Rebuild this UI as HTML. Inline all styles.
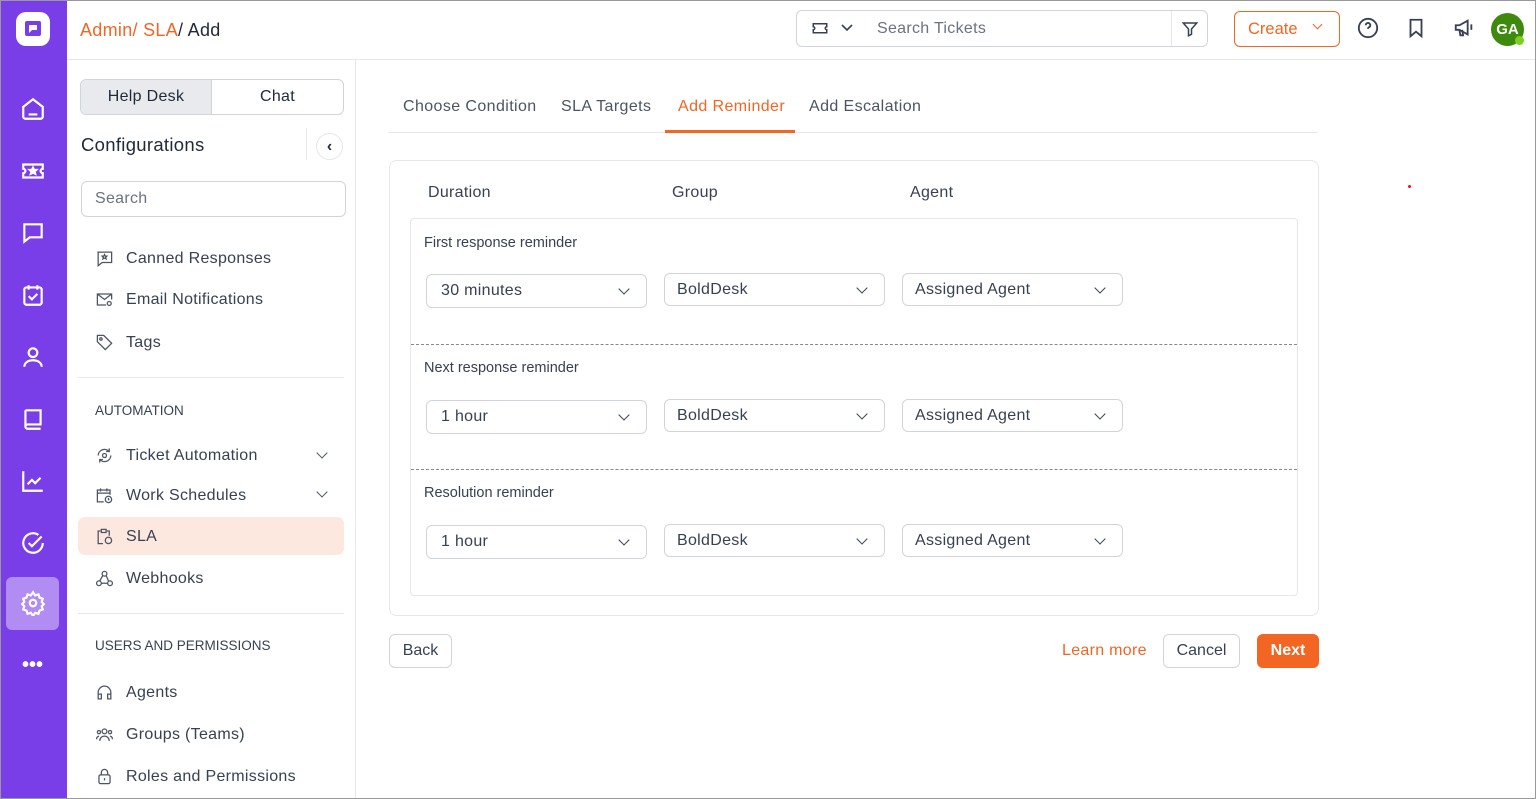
<!DOCTYPE html>
<html><head><style>
*{box-sizing:border-box;margin:0;padding:0}
body{width:1536px;height:799px;overflow:hidden;font-family:"Liberation Sans",sans-serif;color:#1f2937;background:#fff;position:relative}
.frame{position:absolute;left:0;top:0;width:1536px;height:799px;border:1px solid #999;pointer-events:none;z-index:9}
.abs{position:absolute}
.nav{left:0;top:0;width:67px;height:799px;background:#7a3ee8}
.nav svg{position:absolute;left:20px}
.hdr{left:67px;top:0;right:0;height:60px;border-bottom:1px solid #e5e7eb}
.side{left:67px;top:60px;width:289px;bottom:0;border-right:1px solid #e5e7eb}
.item{position:absolute;left:28px;font-size:16px;letter-spacing:.3px;color:#374151;display:flex;align-items:center;gap:12px}
.item svg{width:19px;height:19px}
.sec{position:absolute;left:28px;font-size:13.5px;color:#374151}
.dd{position:absolute;height:34px;width:221px;border:1px solid #d1d5db;border-radius:6px;font-size:16px;letter-spacing:.3px;color:#374151;padding:0 14px;display:flex;align-items:center;justify-content:space-between}
.dd:after{content:"";width:7px;height:7px;border-right:1.6px solid #374151;border-bottom:1.6px solid #374151;transform:rotate(45deg);margin:-4px 4px 0 0}
.lbl{position:absolute;left:424px;font-size:14.5px;color:#374151}
.btn{position:absolute;top:634px;height:34px;border:1px solid #d1d5db;border-radius:6px;font-size:16px;display:flex;align-items:center;justify-content:center;color:#374151}
.tab{position:absolute;top:98px;font-size:16px;letter-spacing:.4px;color:#4b5563}
.chev{position:absolute;width:8px;height:8px;border-right:1.6px solid #4b5563;border-bottom:1.6px solid #4b5563;transform:rotate(45deg)}
</style></head><body>
<div class="frame"></div>
<div class="abs nav">
<svg style="top:12px;left:16px" width="34" height="34" viewBox="0 0 34 34"><rect x="0" y="0" width="34" height="34" rx="10" fill="#fff"/><rect x="9" y="9" width="16" height="15" rx="2" fill="#7a3ee8"/><path d="M13 13h8v5h-5l-3 3z" fill="#fff"/></svg>
<svg style="top:96px" width="26" height="26" viewBox="0 0 24 24" fill="none" stroke="#fff" stroke-width="2"><path d="M3 10l9-7 9 7v9a2 2 0 0 1-2 2H5a2 2 0 0 1-2-2z M8 17h8"/></svg>
<svg style="top:158px" width="26" height="26" viewBox="0 0 24 24" fill="none" stroke="#fff" stroke-width="2"><path d="M3 6h18v4a2 2 0 0 0 0 4v4H3v-4a2 2 0 0 0 0-4z"/><path d="M12 9l1 2h2l-1.5 1.5.5 2-2-1-2 1 .5-2L9 11h2z" fill="#fff"/></svg>
<svg style="top:220px" width="26" height="26" viewBox="0 0 24 24" fill="none" stroke="#fff" stroke-width="2"><path d="M4 4h16v12H9l-5 4z"/></svg>
<svg style="top:282px" width="26" height="26" viewBox="0 0 24 24" fill="none" stroke="#fff" stroke-width="2"><rect x="4" y="5" width="16" height="16" rx="2"/><path d="M8 3v4M16 3v4M8 13l3 3 5-5"/></svg>
<svg style="top:344px" width="26" height="26" viewBox="0 0 24 24" fill="none" stroke="#fff" stroke-width="2"><circle cx="12" cy="8" r="4"/><path d="M4 21c0-4 4-6 8-6s8 2 8 6"/></svg>
<svg style="top:406px" width="26" height="26" viewBox="0 0 24 24" fill="none" stroke="#fff" stroke-width="2"><path d="M5 4h14v13H7a2 2 0 0 0 0 4h12M5 4v15"/></svg>
<svg style="top:468px" width="26" height="26" viewBox="0 0 24 24" fill="none" stroke="#fff" stroke-width="2"><path d="M3 3v18h18M7 15l4-4 3 3 5-5"/></svg>
<svg style="top:530px" width="26" height="26" viewBox="0 0 24 24" fill="none" stroke="#fff" stroke-width="2"><path d="M21 12a9 9 0 1 1-4-7.5"/><path d="M8 12l3 3 9-9"/></svg>
<div class="abs" style="left:6px;top:577px;width:53px;height:53px;border-radius:6px;background:#b18cf3"></div>
<svg style="top:590px" width="26" height="26" viewBox="0 0 24 24" fill="none" stroke="#fff" stroke-width="2"><circle cx="12" cy="12" r="3"/><path d="M12 2l2 3 3-1 1 3 3 1-1 3 2 2-2 2 1 3-3 1-1 3-3-1-2 3-2-3-3 1-1-3-3-1 1-3-2-2 2-2-1-3 3-1 1-3 3 1z"/></svg>
<div class="abs" style="left:22px;top:654px;color:#fff;font-size:20px;font-weight:bold;letter-spacing:0px">•••</div>
</div>
<div class="abs hdr">
<div class="abs" style="left:13px;top:20px;font-size:18px;letter-spacing:.3px"><span style="color:#f26522">Admin/ SLA</span>/ Add</div>
<div class="abs" style="left:729px;top:10px;width:412px;height:37px;border:1px solid #d1d5db;border-radius:6px">
<svg class="abs" style="left:14px;top:10px" width="18" height="16" viewBox="0 0 24 20" fill="none" stroke="#374151" stroke-width="2"><path d="M3 3h18v4a2 2 0 0 0 0 4v4H3v-4a2 2 0 0 0 0-4z"/></svg>
<svg class="abs" style="left:44px;top:12px" width="12" height="10" viewBox="0 0 12 8" fill="none" stroke="#374151" stroke-width="1.6"><path d="M1 1l5 5 5-5"/></svg>
<div class="abs" style="left:80px;top:9px;font-size:16px;letter-spacing:.3px;color:#6b7280">Search Tickets</div>
<div class="abs" style="left:374px;top:0;width:1px;height:35px;background:#e5e7eb"></div>
<svg class="abs" style="left:384px;top:9px" width="18" height="18" viewBox="0 0 24 24" fill="none" stroke="#374151" stroke-width="2"><path d="M3 4h18l-7 8v7l-4 2v-9z"/></svg>
</div>
<div class="abs" style="left:1167px;top:11px;width:106px;height:36px;border:1px solid #f26522;border-radius:6px;color:#f26522;font-size:16.5px;padding:8px 0 0 13px">Create</div>
<div class="abs" style="left:1247px;top:21px;width:7px;height:7px;border-right:1.6px solid #f26522;border-bottom:1.6px solid #f26522;transform:rotate(45deg)"></div>
<svg class="abs" style="left:1290px;top:17px" width="22" height="22" viewBox="0 0 24 24" fill="none" stroke="#374151" stroke-width="2"><circle cx="12" cy="12" r="10"/><path d="M9.5 9a2.5 2.5 0 1 1 3.5 2.3c-.6.3-1 .9-1 1.7M12 17h.01"/></svg>
<svg class="abs" style="left:1338px;top:17px" width="22" height="22" viewBox="0 0 24 24" fill="none" stroke="#374151" stroke-width="2"><path d="M6 3h12v18l-6-5-6 5z"/></svg>
<svg class="abs" style="left:1385px;top:17px" width="24" height="22" viewBox="0 0 24 24" fill="none" stroke="#374151" stroke-width="2"><path d="M3 9h4l9-5v15l-9-5H3zM7 14l1 6h3l-1-6M20 8v6"/></svg>
<div class="abs" style="left:1424px;top:13px;width:33px;height:33px;border-radius:50%;background:#3e8a0c;color:#fff;font-size:15px;font-weight:bold;text-align:center;line-height:33px">GA</div>
<div class="abs" style="left:1448px;top:36px;width:9px;height:9px;border-radius:50%;background:#7bd11a"></div>
</div>
<div class="abs side">
<div class="abs" style="left:13px;top:19px;width:264px;height:36px;border:1px solid #d1d5db;border-radius:6px;display:flex;overflow:hidden;font-size:16px;letter-spacing:.3px">
<div style="width:131px;background:#e9eaee;text-align:center;line-height:34px;border-right:1px solid #d1d5db">Help Desk</div><div style="flex:1;text-align:center;line-height:34px">Chat</div></div>
<div class="abs" style="left:14px;top:74px;font-size:18.5px;letter-spacing:.3px">Configurations</div>
<div class="abs" style="left:239px;top:68px;width:1px;height:32px;background:#e5e7eb"></div>
<div class="abs" style="left:249px;top:73px;width:27px;height:27px;border:1px solid #e5e7eb;border-radius:50%;text-align:center;line-height:25px;font-weight:bold;font-size:16px">‹</div>
<div class="abs" style="left:14px;top:121px;width:265px;height:36px;border:1px solid #d1d5db;border-radius:6px;font-size:16px;letter-spacing:.3px;color:#6b7280;padding:8px 13px">Search</div>
<div class="item" style="top:189px"><svg viewBox="0 0 24 24" fill="none" stroke="#4b5563" stroke-width="1.6"><path d="M3 4h18v13H9l-5 4V4"/><path d="M12 7l1 2h2l-1.5 1.5.5 2-2-1-2 1 .5-2L9 9h2z"/></svg>Canned Responses</div>
<div class="item" style="top:230px"><svg viewBox="0 0 24 24" fill="none" stroke="#4b5563" stroke-width="1.6"><path d="M14 19H3V5h18v7M3 5l9 7 9-7"/><circle cx="18" cy="17" r="2.5"/></svg>Email Notifications</div>
<div class="item" style="top:273px"><svg viewBox="0 0 24 24" fill="none" stroke="#4b5563" stroke-width="1.6"><path d="M3 3h8l10 10-8 8L3 11z"/><circle cx="7.5" cy="7.5" r="1.5"/></svg>Tags</div>
<div class="abs" style="left:11px;top:317px;width:266px;height:1px;background:#e5e7eb"></div>
<div class="sec" style="top:343px">AUTOMATION</div>
<div class="item" style="top:386px"><svg viewBox="0 0 24 24" fill="none" stroke="#4b5563" stroke-width="1.6"><path d="M4 12a8 8 0 0 1 14-5M20 12a8 8 0 0 1-14 5M18 3v4h-4M6 21v-4h4"/><circle cx="12" cy="12" r="2.5"/></svg>Ticket Automation</div>
<div class="item" style="top:426px"><svg viewBox="0 0 24 24" fill="none" stroke="#4b5563" stroke-width="1.6"><path d="M11 20H3V5h16v6M3 9h16M7 3v4M15 3v4"/><circle cx="17" cy="17" r="4"/><path d="M17 15v2l1 1"/></svg>Work Schedules</div>
<div class="chev" style="left:251px;top:389px"></div>
<div class="chev" style="left:251px;top:428px"></div>
<div class="abs" style="left:11px;top:457px;width:266px;height:38px;border-radius:7px;background:#fde8df"></div>
<div class="item" style="top:467px"><svg viewBox="0 0 24 24" fill="none" stroke="#4b5563" stroke-width="1.6"><path d="M10 21H4V5h3M15 5h3v6M8 3h6v4H8z"/><circle cx="17" cy="17" r="4"/></svg>SLA</div>
<div class="item" style="top:509px"><svg viewBox="0 0 24 24" fill="none" stroke="#4b5563" stroke-width="1.6"><circle cx="12" cy="6" r="3"/><circle cx="5" cy="18" r="3"/><circle cx="19" cy="18" r="3"/><path d="M10 8l-4 7M8 18h8M14 8l3 7"/></svg>Webhooks</div>
<div class="abs" style="left:11px;top:553px;width:266px;height:1px;background:#e5e7eb"></div>
<div class="sec" style="top:578px">USERS AND PERMISSIONS</div>
<div class="item" style="top:623px"><svg viewBox="0 0 24 24" fill="none" stroke="#4b5563" stroke-width="1.6"><path d="M4 18v-6a8 8 0 0 1 16 0v6M4 14h4v6H4zM16 14h4v6h-4z"/></svg>Agents</div>
<div class="item" style="top:665px"><svg viewBox="0 0 24 24" fill="none" stroke="#4b5563" stroke-width="1.6"><circle cx="12" cy="8" r="3"/><circle cx="5" cy="9" r="2"/><circle cx="19" cy="9" r="2"/><path d="M6 20a6 6 0 0 1 12 0M2 18a4 4 0 0 1 3-4M22 18a4 4 0 0 0-3-4"/></svg>Groups (Teams)</div>
<div class="item" style="top:707px"><svg viewBox="0 0 24 24" fill="none" stroke="#4b5563" stroke-width="1.6"><rect x="5" y="10" width="14" height="11" rx="2"/><path d="M8 10V7a4 4 0 0 1 8 0v3M12 14v3"/></svg>Roles and Permissions</div>
</div>
<div class="abs" style="left:388px;top:132px;width:930px;height:1px;background:#e5e7eb"></div>
<div class="tab" style="left:403px">Choose Condition</div>
<div class="tab" style="left:561px">SLA Targets</div>
<div class="tab" style="left:678px;color:#f26522">Add Reminder</div>
<div class="abs" style="left:665px;top:130px;width:130px;height:3px;background:#f26522"></div>
<div class="tab" style="left:809px">Add Escalation</div>
<div class="abs" style="left:389px;top:160px;width:930px;height:456px;border:1px solid #e5e7eb;border-radius:8px"></div>
<div class="abs" style="left:428px;top:184px;font-size:16px;letter-spacing:.3px;color:#374151">Duration</div>
<div class="abs" style="left:672px;top:184px;font-size:16px;letter-spacing:.3px;color:#374151">Group</div>
<div class="abs" style="left:910px;top:184px;font-size:16px;letter-spacing:.3px;color:#374151">Agent</div>
<div class="abs" style="left:410px;top:218px;width:888px;height:378px;border:1px solid #e5e7eb;border-radius:4px"></div>
<div class="abs" style="left:411px;top:344px;width:886px;border-top:1px dashed #888"></div>
<div class="abs" style="left:411px;top:469px;width:886px;border-top:1px dashed #888"></div>
<div class="lbl" style="top:235px">First response reminder</div>
<div class="lbl" style="top:360px">Next response reminder</div>
<div class="lbl" style="top:485px">Resolution reminder</div>
<div class="dd" style="left:426px;top:274px">30 minutes</div>
<div class="dd" style="left:664px;top:273px;height:33px;padding-left:12px">BoldDesk</div>
<div class="dd" style="left:902px;top:273px;height:33px;padding-left:12px">Assigned Agent</div>
<div class="dd" style="left:426px;top:400px">1 hour</div>
<div class="dd" style="left:664px;top:399px;height:33px;padding-left:12px">BoldDesk</div>
<div class="dd" style="left:902px;top:399px;height:33px;padding-left:12px">Assigned Agent</div>
<div class="dd" style="left:426px;top:525px">1 hour</div>
<div class="dd" style="left:664px;top:524px;height:33px;padding-left:12px">BoldDesk</div>
<div class="dd" style="left:902px;top:524px;height:33px;padding-left:12px">Assigned Agent</div>
<div class="btn" style="left:389px;width:63px">Back</div>
<div class="abs" style="left:1062px;top:642px;font-size:16px;letter-spacing:.3px;color:#f26522">Learn more</div>
<div class="btn" style="left:1163px;width:77px">Cancel</div>
<div class="btn" style="left:1257px;width:62px;background:#f26522;border-color:#f26522;color:#fff;font-weight:bold">Next</div>
<div class="abs" style="left:1408px;top:185px;width:3px;height:3px;border-radius:50%;background:#e11"></div>
</body></html>
